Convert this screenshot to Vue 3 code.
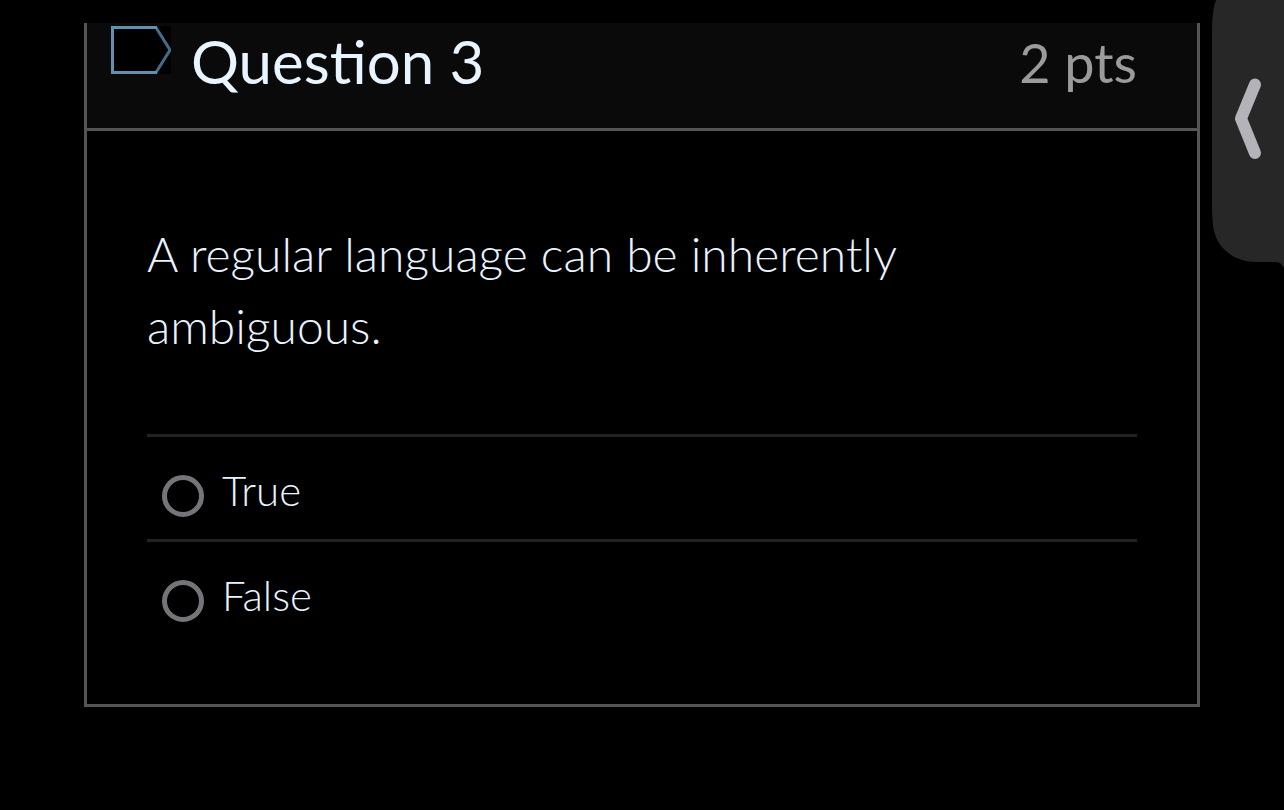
<script setup>
import { ref } from 'vue'

const answers = ['True', 'False']
const selected = ref(null)
const flagged = ref(false)
</script>

<template>
  <main class="page">
    <section class="question" aria-labelledby="question-title">
      <header class="question-header">
        <button
          class="flag"
          type="button"
          aria-label="Flag question"
          :aria-pressed="flagged"
          @click="flagged = !flagged"
        >
          <svg width="60" height="48" viewBox="0 0 60 48" fill="none">
            <path d="M45 1.5L59 24L45 46.5" stroke="#456d88" stroke-width="3" />
            <path d="M46 1.5H1.5V46.5H46" stroke="#6291b0" stroke-width="3" />
          </svg>
        </button>
        <h1 id="question-title" class="title">Question 3</h1>
        <span class="points">2 pts</span>
      </header>

      <div class="question-body">
        <p class="prompt">A regular language can be inherently ambiguous.</p>
        <div class="answers" role="radiogroup" aria-labelledby="question-title">
          <label v-for="answer in answers" :key="answer" class="answer">
            <input v-model="selected" class="radio" type="radio" name="answer" :value="answer" />
            <span class="answer-text">{{ answer }}</span>
          </label>
        </div>
      </div>
    </section>

    <button class="drawer" type="button" aria-label="Open side panel">
      <svg width="72" height="268" viewBox="0 0 72 268" fill="none">
        <path
          d="M4 0C1 9 0 18 0 34V206C0 232 4 242 14 251C24 260 34 262 50 262H62C68 262 70 264 72 268V0Z"
          fill="#272727"
        />
        <path
          d="M43 84.500L29 118.500L43 153"
          stroke="#b5b3ba"
          stroke-width="12"
          stroke-linecap="round"
          stroke-linejoin="round"
        />
      </svg>
    </button>
  </main>
</template>

<style>
body {
  background: #000;
}
</style>

<style scoped>
.page {
  padding: 23px 84px 0;
  font-family: Lato, "Liberation Sans", sans-serif;
  color: #e8f4ff;
}

.question {
  border: 3px solid #555;
  border-top: 0;
}

.question-header {
  display: flex;
  align-items: flex-start;
  box-sizing: border-box;
  height: 108px;
  padding: 3px 60px 0 24px;
  background: #0a0a0a;
  border-bottom: 3px solid #555;
}

.flag {
  padding: 0;
  border: 0;
  background: #000;
}

.flag svg,
.drawer svg {
  display: block;
}

.title {
  flex: 1;
  margin: 0 0 0 20px;
  font-size: 60px;
  font-weight: 400;
  line-height: 70px;
}

.points {
  font-size: 54px;
  line-height: 74px;
  color: #9b9b9b;
}

.question-body {
  padding: 87px 60px 60px;
}

.prompt {
  margin: 0 0 72px;
  font-size: 48px;
  font-weight: 300;
  line-height: 72px;
}

.answer {
  display: flex;
  align-items: flex-start;
  gap: 18px;
  height: 102px;
  padding-left: 15px;
  border-top: 3px solid #222;
}

.radio {
  appearance: none;
  box-sizing: border-box;
  width: 42px;
  height: 42px;
  margin: 38px 0 0;
  border: 5px solid #757579;
  border-radius: 50%;
}

.radio:checked {
  background: #6291b0;
}

.answer-text {
  padding-top: 23px;
  font-size: 42px;
  font-weight: 300;
  line-height: 60px;
}

.drawer {
  position: absolute;
  top: 0;
  right: 0;
  padding: 0;
  border: 0;
  background: none;
}
</style>
